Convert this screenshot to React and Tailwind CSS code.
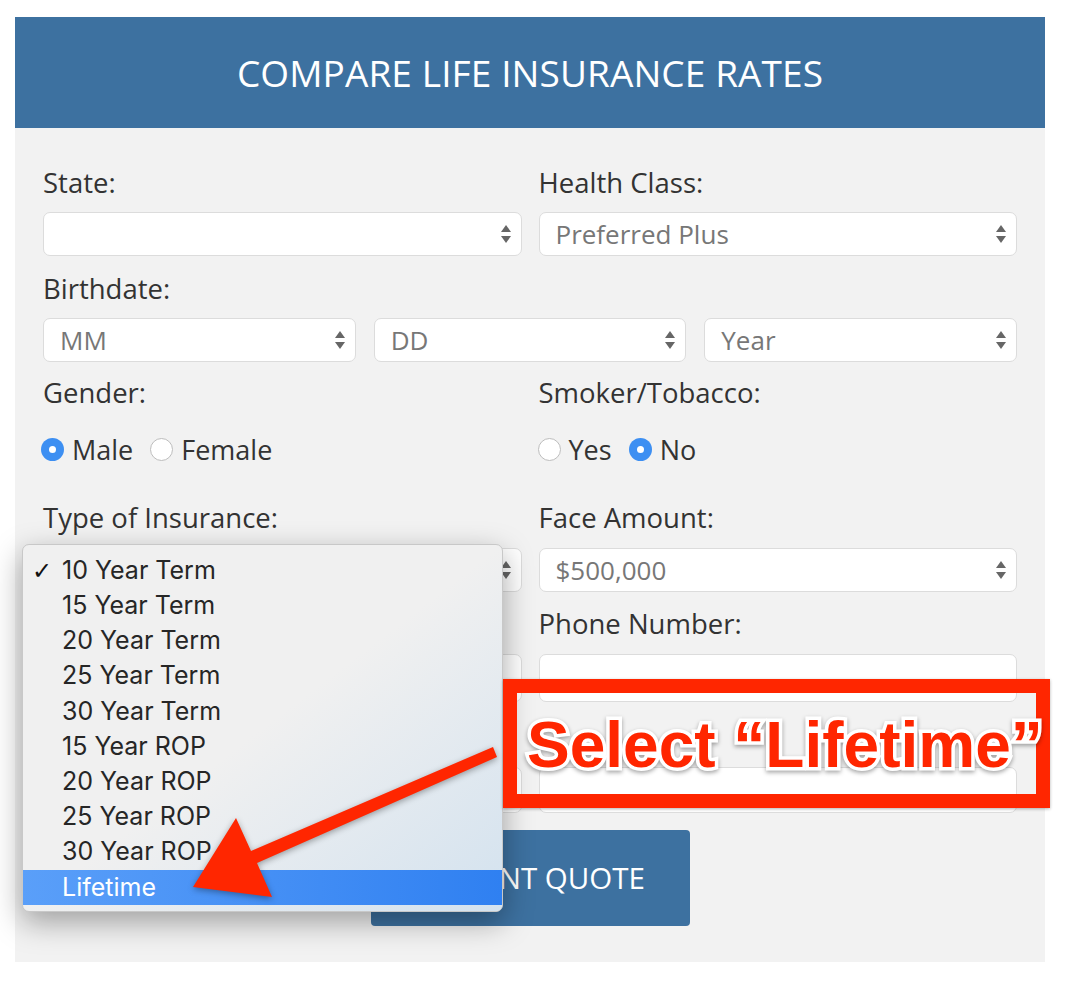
import React from "react";

const SelArrow = () => (
  <svg width="12" height="22" viewBox="0 0 12 22" className="shrink-0">
    <path d="M6 2 L11 9 L1 9 Z" fill="#666" />
    <path d="M6 20 L11 13 L1 13 Z" fill="#666" />
  </svg>
);

const Select = ({ value = "", className = "" }) => (
  <div
    className={`h-[44px] bg-white border border-[#dcdcdc] rounded-[7px] flex items-center justify-between pl-[16px] pr-[9px] ${className}`}
  >
    <span className="text-[26px] text-[#777] leading-none">{value}</span>
    <SelArrow />
  </div>
);

const Radio = ({ checked, label }) => (
  <div className="flex items-center gap-[8px]">
    {checked ? (
      <div className="w-[23px] h-[23px] rounded-full bg-[#3d8ff2] flex items-center justify-center">
        <div className="w-[7px] h-[7px] rounded-full bg-white" />
      </div>
    ) : (
      <div className="w-[23px] h-[23px] rounded-full bg-white border border-[#bdbdbd]" />
    )}
    <span className="text-[27px] text-[#333] leading-none">{label}</span>
  </div>
);

const Label = ({ children, className = "" }) => (
  <div className={`h-[32px] leading-[32px] text-[27.5px] text-[#333] ${className}`}>{children}</div>
);

const items = [
  "10 Year Term",
  "15 Year Term",
  "20 Year Term",
  "25 Year Term",
  "30 Year Term",
  "15 Year ROP",
  "20 Year ROP",
  "25 Year ROP",
  "30 Year ROP",
  "Lifetime",
];

export default function App() {
  return (
    <div
      className="relative w-[1080px] h-[992px] bg-white overflow-hidden"
      style={{ fontFamily: '"Open Sans", sans-serif' }}
    >
      <div className="ml-[15px] mt-[17px] w-[1030px] h-[945px] bg-[#f2f2f2]">
        <div className="h-[111px] bg-[#3d71a0] flex items-center justify-center">
          <h1 className="text-white text-[37px] tracking-[0.1px] font-normal leading-none">
            COMPARE LIFE INSURANCE RATES
          </h1>
        </div>
        <div className="px-[28px] pt-[39px]">
          <div className="grid grid-cols-2 gap-x-[17px]">
            <div>
              <Label>State:</Label>
              <Select className="mt-[13px]" />
            </div>
            <div>
              <Label>Health Class:</Label>
              <Select className="mt-[13px]" value="Preferred Plus" />
            </div>
          </div>

          <Label className="mt-[17px]">Birthdate:</Label>
          <div className="grid grid-cols-3 gap-x-[18px] mt-[13px]">
            <Select value="MM" />
            <Select value="DD" />
            <Select value="Year" />
          </div>

          <div className="grid grid-cols-2 gap-x-[17px] mt-[15px]">
            <div>
              <Label>Gender:</Label>
              <div className="h-[32px] mt-[24px] flex items-center gap-[17px] -ml-[2px]">
                <Radio checked label="Male" />
                <Radio label="Female" />
              </div>
            </div>
            <div>
              <Label>Smoker/Tobacco:</Label>
              <div className="h-[32px] mt-[24px] flex items-center gap-[17px] -ml-[1px]">
                <Radio label="Yes" />
                <Radio checked label="No" />
              </div>
            </div>
          </div>

          <div className="grid grid-cols-2 gap-x-[17px] mt-[37px]">
            <div>
              <Label>Type of Insurance:</Label>
              <Select className="mt-[14px]" />
            </div>
            <div>
              <Label>Face Amount:</Label>
              <Select className="mt-[14px]" value="$500,000" />
            </div>
          </div>

          <div className="grid grid-cols-2 gap-x-[17px] mt-[16px]">
            <div>
              <Label />
              <div className="mt-[14px] h-[48px] bg-white border border-[#dcdcdc] rounded-[7px]" />
            </div>
            <div>
              <Label>Phone Number:</Label>
              <div className="mt-[14px] h-[48px] bg-white border border-[#dcdcdc] rounded-[7px]" />
            </div>
          </div>

          <div className="grid grid-cols-2 gap-x-[17px] mt-[65px]">
            <div className="h-[46px] bg-white border border-[#dcdcdc] rounded-[7px]" />
            <div className="h-[46px] bg-white border border-[#dcdcdc] rounded-[7px]" />
          </div>

          <div className="flex justify-center mt-[17px]">
            <button className="w-[319px] h-[96px] bg-[#3d71a0] rounded-[4px] text-white text-[29.5px] leading-none flex items-center justify-center pl-[2px] whitespace-nowrap">
              INSTANT QUOTE
            </button>
          </div>
        </div>
      </div>

      {/* Dropdown menu overlay */}
      <div
        className="absolute left-[22px] top-[544px] w-[481px] h-[368px] rounded-[7px] bg-[#f0f0f0] border border-[#c8c8c8] shadow-[0_10px_30px_rgba(0,0,0,0.35)] overflow-hidden pt-[8px]"
        style={{ fontFamily: 'Inter, "Liberation Sans", sans-serif' }}
      >
        <div className="absolute inset-0 bg-linear-to-br from-transparent via-transparent to-[#d3e2ef]" />
        {items.map((it, i) => (
          <div
            key={it}
            className={`relative h-[35.2px] flex items-center pl-[39px] text-[25px] ${
              i === 9
                ? "bg-linear-to-r from-[#5a9ff9] to-[#2f80f1] text-white"
                : "text-[#262626]"
            }`}
          >
            {i === 0 && (
              <span
                className="absolute left-[9px] text-[24px] font-bold text-[#111]"
                style={{ fontFamily: '"DejaVu Sans", sans-serif' }}
              >
                ✓
              </span>
            )}
            {it}
          </div>
        ))}
      </div>

      {/* Red annotation box */}
      <div className="absolute left-[503px] top-[679px] w-[547px] h-[129px] border-[14px] border-[#ff2600] shadow-[0_1px_3px_rgba(0,0,0,0.3)]" />
      <div
        className="absolute left-[527px] top-[713px] text-[64px] font-bold leading-none text-[#ff2600] whitespace-nowrap [-webkit-text-stroke:7px_white] [paint-order:stroke_fill] [filter:drop-shadow(0_2px_2px_rgba(0,0,0,0.35))]"
        style={{ fontFamily: '"Liberation Sans", Arial, sans-serif' }}
      >
        Select “Lifetime”
      </div>

      {/* Arrow */}
      <svg
        className="absolute left-0 top-0 pointer-events-none"
        width="1080"
        height="992"
        viewBox="0 0 1080 992"
        style={{ filter: "drop-shadow(0 2px 3px rgba(0,0,0,0.35))" }}
      >
        <polygon
          points="493,747 497,757 257,863 272,897 193,887 236,818 251,851"
          fill="#ff2600"
        />
      </svg>
    </div>
  );
}
